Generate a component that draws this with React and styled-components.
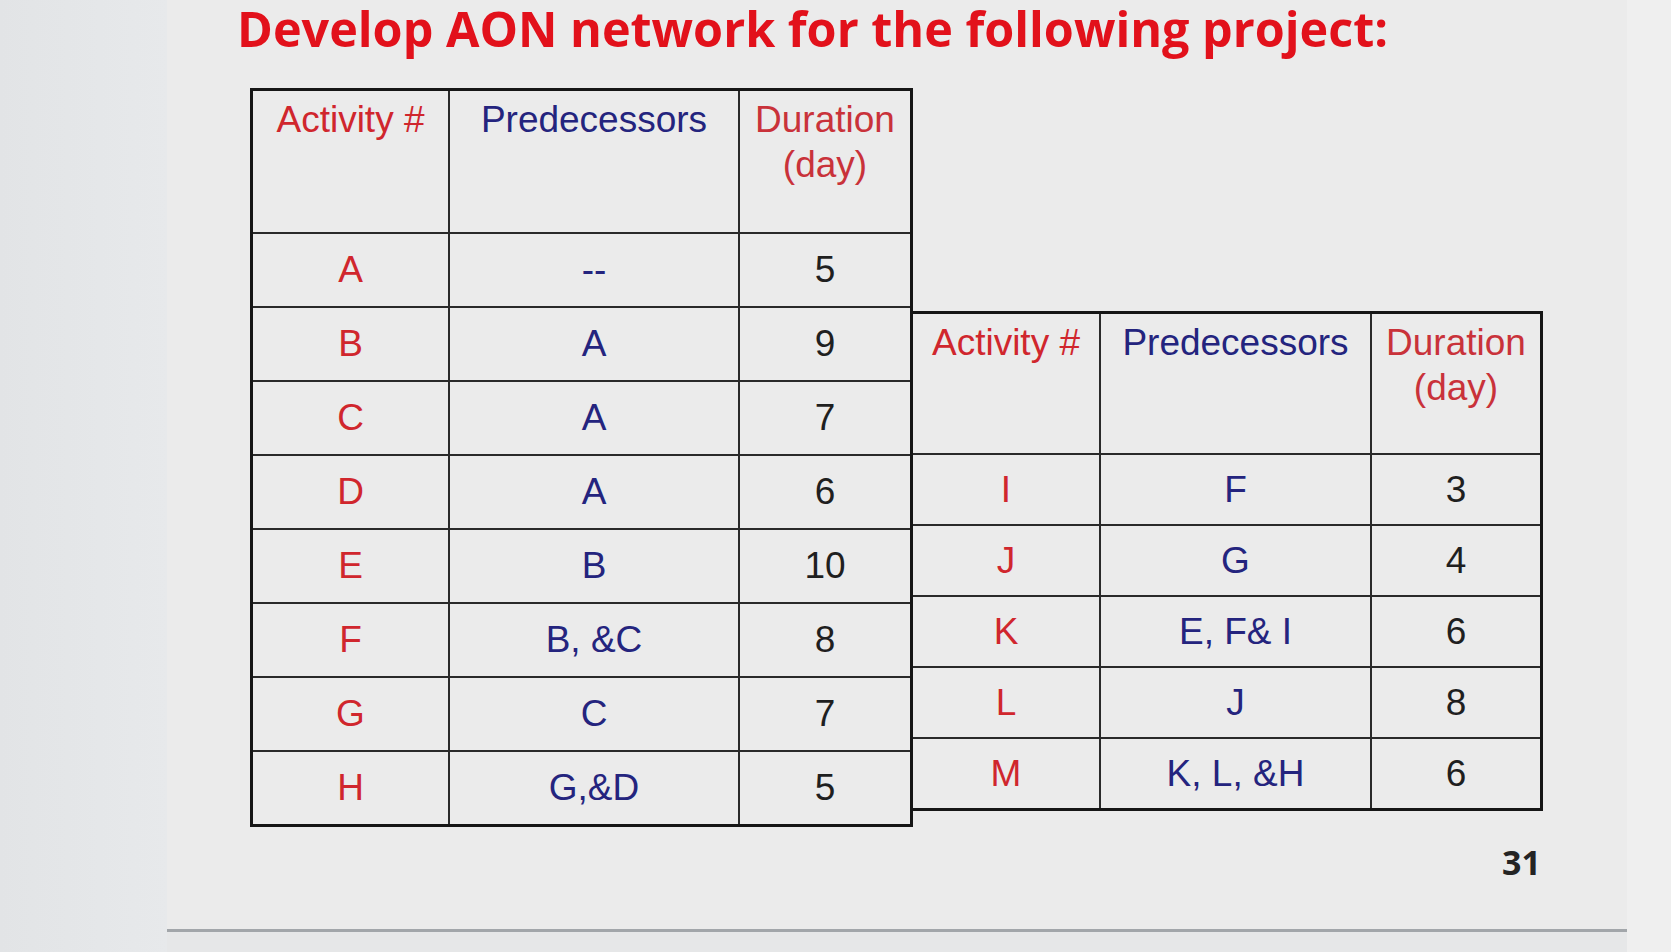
import React from "react";
import styled, { createGlobalStyle } from "styled-components";

const GlobalStyle = createGlobalStyle`
  html, body {
    margin: 0;
    padding: 0;
    background: #e4e6e8;
  }
`;

const Page = styled.div`
  display: flex;
  flex-direction: row;
  width: 1671px;
  height: 952px;
  overflow: hidden;
  background: #e6e7e8;
`;

const LeftMargin = styled.div`
  width: 167px;
  flex-shrink: 0;
  background: linear-gradient(90deg, #e2e4e6, #e7e9eb);
`;

const RightMargin = styled.div`
  flex: 1;
  background: #efefef;
`;

const Slide = styled.div`
  width: 1460px;
  height: 929px;
  flex-shrink: 0;
  display: flex;
  flex-direction: column;
  background: #ebebeb;
  border-bottom: 3px solid #a2a6aa;
`;

const Title = styled.h1`
  margin: 0 0 0 70px;
  font-family: "Open Sans", "Liberation Sans", sans-serif;
  font-weight: 700;
  font-size: 48.5px;
  line-height: 56px;
  color: #e2111b;
  white-space: nowrap;
`;

const Tables = styled.div`
  display: flex;
  flex-direction: row;
  align-items: flex-start;
  margin: 32px 0 0 83px;
`;

const Grid = styled.div`
  display: grid;
  grid-template-columns: ${(p) => p.$cols};
  grid-template-rows: ${(p) => p.$rows};
  gap: 2px;
  background: #2a2a2a;
  border: 3px solid #161616;
  margin-top: ${(p) => p.$top || 0}px;
  margin-left: ${(p) => p.$left || 0}px;
`;

const colors = {
  act: "#d0262d",
  pred: "#24247e",
  dur: "#1f1f1f",
  durHead: "#c9323a",
};

const Cell = styled.div`
  background: #ebebeb;
  display: flex;
  justify-content: center;
  align-items: ${(p) => (p.$head ? "flex-start" : "center")};
  padding-top: ${(p) => (p.$head ? "6px" : "0")};
  text-align: center;
  font-family: "Liberation Sans", Arial, sans-serif;
  font-size: 37px;
  line-height: ${(p) => (p.$head ? "45px" : "40px")};
  color: ${(p) => colors[p.$kind]};
  white-space: nowrap;
`;

const PageNumber = styled.div`
  align-self: flex-end;
  margin: 18px 86px 0 0;
  font-family: "Open Sans", "Liberation Sans", sans-serif;
  font-weight: 700;
  font-size: 34px;
  line-height: 34px;
  color: #242424;
`;

const leftRows = [
  ["A", "--", "5"],
  ["B", "A", "9"],
  ["C", "A", "7"],
  ["D", "A", "6"],
  ["E", "B", "10"],
  ["F", "B, &C", "8"],
  ["G", "C", "7"],
  ["H", "G,&D", "5"],
];

const rightRows = [
  ["I", "F", "3"],
  ["J", "G", "4"],
  ["K", "E, F& I", "6"],
  ["L", "J", "8"],
  ["M", "K, L, &H", "6"],
];

const ActivityTable = ({ rows, cols, headHeight, rowHeight, top, left }) => (
  <Grid
    $cols={cols}
    $rows={`${headHeight}px repeat(${rows.length}, ${rowHeight}px)`}
    $top={top}
    $left={left}
  >
    <Cell $head $kind="act">Activity #</Cell>
    <Cell $head $kind="pred">Predecessors</Cell>
    <Cell $head $kind="durHead">
      Duration
      <br />
      (day)
    </Cell>
    {rows.map(([act, pred, dur]) => (
      <React.Fragment key={act}>
        <Cell $kind="act">{act}</Cell>
        <Cell $kind="pred">{pred}</Cell>
        <Cell $kind="dur">{dur}</Cell>
      </React.Fragment>
    ))}
  </Grid>
);

const App = () => {
  return (
    <Page>
      <GlobalStyle />
      <LeftMargin />
      <Slide>
        <Title>Develop AON network for the following project:</Title>
        <Tables>
          <ActivityTable
            rows={leftRows}
            cols="195px 288px 170px"
            headHeight={141}
            rowHeight={72}
          />
          <ActivityTable
            rows={rightRows}
            cols="186px 269px 168px"
            headHeight={139}
            rowHeight={69}
            top={223}
            left={-3}
          />
        </Tables>
        <PageNumber>31</PageNumber>
      </Slide>
      <RightMargin />
    </Page>
  );
};

export default App;
